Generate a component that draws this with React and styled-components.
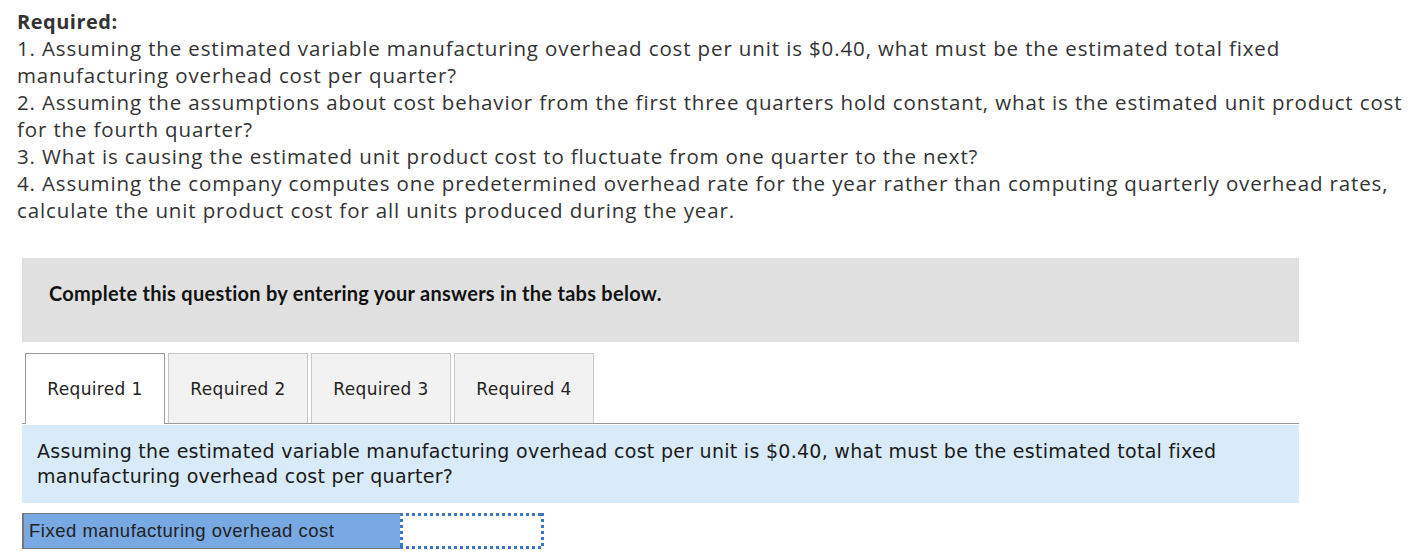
import styled, { createGlobalStyle } from "styled-components";

const GlobalStyle = createGlobalStyle`
  body {
    margin: 0;
    background: #ffffff;
  }
`;

const Page = styled.div`
  width: 1423px;
  min-height: 559px;
  background: #ffffff;
`;

const Prompt = styled.div`
  padding: 8px 17px 0;
  font-family: "Open Sans", "Liberation Sans", sans-serif;
  font-size: 20.5px;
  letter-spacing: 0.87px;
  line-height: 27px;
  color: #333333;
  white-space: nowrap;
`;

const Heading = styled.div`
  font-weight: 700;
  font-size: 20px;
  letter-spacing: 0.5px;
`;

const Item = styled.div``;

const Workspace = styled.div`
  margin: 34px 0 0 22px;
  width: 1277px;
`;

const Instructions = styled.div`
  height: 84px;
  box-sizing: border-box;
  padding: 22px 27px;
  background: #e0e0e0;
  font-family: Lato, "Liberation Sans", sans-serif;
  font-weight: 700;
  font-size: 20px;
  letter-spacing: 0.27px;
  line-height: 26px;
  color: #111111;
`;

const TabBar = styled.div`
  display: flex;
  gap: 3px;
  margin-top: 11px;
  padding-left: 3px;
  border-bottom: 1px solid #999999;
`;

const Tab = styled.div`
  width: 140px;
  box-sizing: border-box;
  display: flex;
  align-items: center;
  justify-content: center;
  font-family: "DejaVu Sans", Verdana, sans-serif;
  font-size: 17px;
  letter-spacing: 0.35px;
  color: #222222;
  background: ${({ $active }) => ($active ? "#ffffff" : "#f2f2f2")};
  border: 1px solid ${({ $active }) => ($active ? "#999999" : "#c8c8c8")};
  border-bottom: none;
  margin-bottom: ${({ $active }) => ($active ? "-1px" : "0")};
  height: ${({ $active }) => ($active ? "71px" : "70px")};
`;

const Question = styled.div`
  margin-top: 1px;
  height: 78px;
  box-sizing: border-box;
  padding: 14px 15px 0;
  background: #d9eaf8;
  font-family: "DejaVu Sans", Verdana, sans-serif;
  font-size: 19px;
  letter-spacing: 0.28px;
  line-height: 25px;
  color: #1a1a1a;
  white-space: nowrap;
`;

const AnswerRow = styled.div`
  display: flex;
  margin-top: 10px;
  height: 36px;
`;

const AnswerLabel = styled.div`
  width: 378px;
  box-sizing: border-box;
  display: flex;
  align-items: center;
  padding-left: 5px;
  background: #78a9e3;
  border: 1px solid #777777;
  border-left-width: 2px;
  border-right: none;
  font-family: "Liberation Sans", Arial, sans-serif;
  font-size: 18.5px;
  letter-spacing: 0.5px;
  color: #222222;
`;

const AnswerInput = styled.input`
  width: 144px;
  height: 36px;
  box-sizing: border-box;
  margin: 0;
  padding: 0 6px;
  border: none;
  outline: none;
  font-family: "Liberation Sans", Arial, sans-serif;
  font-size: 16px;
  background-color: #ffffff;
  background-image:
    repeating-linear-gradient(90deg, #3b78c4 0 3px, transparent 3px 6px),
    repeating-linear-gradient(90deg, #3b78c4 0 3px, transparent 3px 6px),
    repeating-linear-gradient(180deg, #3b78c4 0 3px, transparent 3px 6px),
    repeating-linear-gradient(180deg, #3b78c4 0 3px, transparent 3px 6px);
  background-size: 100% 3px, 100% 3px, 3px 100%, 3px 100%;
  background-position: 0 0, 0 100%, 0 0, 100% 0;
  background-repeat: no-repeat;
`;

const tabs = ["Required 1", "Required 2", "Required 3", "Required 4"];

export default function App() {
  return (
    <Page>
      <GlobalStyle />
      <Prompt>
        <Heading>Required:</Heading>
        <Item>
          1. Assuming the estimated variable manufacturing overhead cost per unit is $0.40, what must be the estimated total fixed
          <br />
          manufacturing overhead cost per quarter?
        </Item>
        <Item>
          2. Assuming the assumptions about cost behavior from the first three quarters hold constant, what is the estimated unit product cost
          <br />
          for the fourth quarter?
        </Item>
        <Item>3. What is causing the estimated unit product cost to fluctuate from one quarter to the next?</Item>
        <Item>
          4. Assuming the company computes one predetermined overhead rate for the year rather than computing quarterly overhead rates,
          <br />
          calculate the unit product cost for all units produced during the year.
        </Item>
      </Prompt>

      <Workspace>
        <Instructions>Complete this question by entering your answers in the tabs below.</Instructions>

        <TabBar>
          {tabs.map((t, i) => (
            <Tab key={t} $active={i === 0}>
              {t}
            </Tab>
          ))}
        </TabBar>

        <Question>
          Assuming the estimated variable manufacturing overhead cost per unit is $0.40, what must be the estimated total fixed
          <br />
          manufacturing overhead cost per quarter?
        </Question>

        <AnswerRow>
          <AnswerLabel>Fixed manufacturing overhead cost</AnswerLabel>
          <AnswerInput type="text" />
        </AnswerRow>
      </Workspace>
    </Page>
  );
}
